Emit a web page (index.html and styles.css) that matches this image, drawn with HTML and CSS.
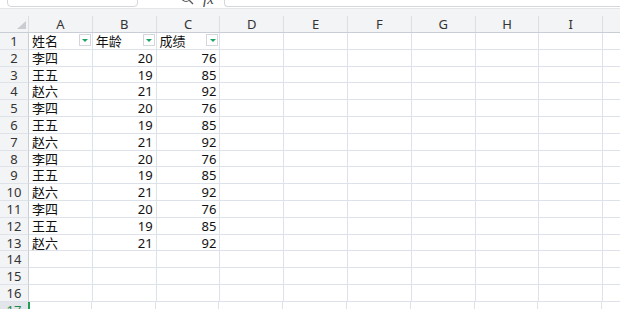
FILE: index.html
```html
<!DOCTYPE html>
<html lang="zh">
<head>
<meta charset="utf-8">
<link rel="stylesheet" href="styles.css">
</head>
<body>
<div class="app">
  <div class="topbar">
    <div class="namebox">K11</div>
    <div class="search">
      <svg width="14" height="14" viewBox="0 0 14 14"><circle cx="6" cy="6" r="4.5" fill="none" stroke="#555" stroke-width="1.2"/><line x1="9.3" y1="9.3" x2="13" y2="13" stroke="#555" stroke-width="1.3"/></svg>
    </div>
    <div class="fx">fx</div>
    <div class="formula"></div>
  </div>
  <div class="band"></div>
  <div class="sheet">
    <div class="row head">
      <div class="corner"><span class="tri"></span></div>
      <div class="ch">A</div><div class="ch">B</div><div class="ch">C</div><div class="ch">D</div><div class="ch">E</div><div class="ch">F</div><div class="ch">G</div><div class="ch">H</div><div class="ch">I</div><div class="ch"></div>
    </div>
    <div class="row">
      <div class="rh">1</div>
      <div class="c">姓名<span class="dd"></span></div><div class="c">年龄<span class="dd"></span></div><div class="c">成绩<span class="dd"></span></div>
      <div class="c"></div><div class="c"></div><div class="c"></div><div class="c"></div><div class="c"></div><div class="c"></div><div class="c"></div>
    </div>
    <div class="row"><div class="rh">2</div><div class="c">李四</div><div class="c n">20</div><div class="c n">76</div><div class="c"></div><div class="c"></div><div class="c"></div><div class="c"></div><div class="c"></div><div class="c"></div><div class="c"></div></div>
    <div class="row"><div class="rh">3</div><div class="c">王五</div><div class="c n">19</div><div class="c n">85</div><div class="c"></div><div class="c"></div><div class="c"></div><div class="c"></div><div class="c"></div><div class="c"></div><div class="c"></div></div>
    <div class="row"><div class="rh">4</div><div class="c">赵六</div><div class="c n">21</div><div class="c n">92</div><div class="c"></div><div class="c"></div><div class="c"></div><div class="c"></div><div class="c"></div><div class="c"></div><div class="c"></div></div>
    <div class="row"><div class="rh">5</div><div class="c">李四</div><div class="c n">20</div><div class="c n">76</div><div class="c"></div><div class="c"></div><div class="c"></div><div class="c"></div><div class="c"></div><div class="c"></div><div class="c"></div></div>
    <div class="row"><div class="rh">6</div><div class="c">王五</div><div class="c n">19</div><div class="c n">85</div><div class="c"></div><div class="c"></div><div class="c"></div><div class="c"></div><div class="c"></div><div class="c"></div><div class="c"></div></div>
    <div class="row"><div class="rh">7</div><div class="c">赵六</div><div class="c n">21</div><div class="c n">92</div><div class="c"></div><div class="c"></div><div class="c"></div><div class="c"></div><div class="c"></div><div class="c"></div><div class="c"></div></div>
    <div class="row"><div class="rh">8</div><div class="c">李四</div><div class="c n">20</div><div class="c n">76</div><div class="c"></div><div class="c"></div><div class="c"></div><div class="c"></div><div class="c"></div><div class="c"></div><div class="c"></div></div>
    <div class="row"><div class="rh">9</div><div class="c">王五</div><div class="c n">19</div><div class="c n">85</div><div class="c"></div><div class="c"></div><div class="c"></div><div class="c"></div><div class="c"></div><div class="c"></div><div class="c"></div></div>
    <div class="row"><div class="rh">10</div><div class="c">赵六</div><div class="c n">21</div><div class="c n">92</div><div class="c"></div><div class="c"></div><div class="c"></div><div class="c"></div><div class="c"></div><div class="c"></div><div class="c"></div></div>
    <div class="row"><div class="rh">11</div><div class="c">李四</div><div class="c n">20</div><div class="c n">76</div><div class="c"></div><div class="c"></div><div class="c"></div><div class="c"></div><div class="c"></div><div class="c"></div><div class="c"></div></div>
    <div class="row"><div class="rh">12</div><div class="c">王五</div><div class="c n">19</div><div class="c n">85</div><div class="c"></div><div class="c"></div><div class="c"></div><div class="c"></div><div class="c"></div><div class="c"></div><div class="c"></div></div>
    <div class="row"><div class="rh">13</div><div class="c">赵六</div><div class="c n">21</div><div class="c n">92</div><div class="c"></div><div class="c"></div><div class="c"></div><div class="c"></div><div class="c"></div><div class="c"></div><div class="c"></div></div>
    <div class="row"><div class="rh">14</div><div class="c"></div><div class="c"></div><div class="c"></div><div class="c"></div><div class="c"></div><div class="c"></div><div class="c"></div><div class="c"></div><div class="c"></div><div class="c"></div></div>
    <div class="row"><div class="rh">15</div><div class="c"></div><div class="c"></div><div class="c"></div><div class="c"></div><div class="c"></div><div class="c"></div><div class="c"></div><div class="c"></div><div class="c"></div><div class="c"></div></div>
    <div class="row"><div class="rh">16</div><div class="c"></div><div class="c"></div><div class="c"></div><div class="c"></div><div class="c"></div><div class="c"></div><div class="c"></div><div class="c"></div><div class="c"></div><div class="c"></div></div>
    <div class="row"><div class="rh sel">17</div><div class="c first"></div><div class="c"></div><div class="c"></div><div class="c"></div><div class="c"></div><div class="c"></div><div class="c"></div><div class="c"></div><div class="c"></div><div class="c"></div></div>
  </div>
</div>
</body>
</html>
```

FILE: styles.css
```css
* { box-sizing: border-box; }
html, body { margin: 0; padding: 0; }
body {
  width: 620px;
  height: 309px;
  overflow: hidden;
  background: #fff;
  font-family: "Noto Sans", "Noto Sans CJK SC", sans-serif;
  color: #1a1a1a;
}
.app { width: 620px; height: 309px; overflow: hidden; }

.topbar {
  height: 9px;
  background: #fff;
  border-bottom: 1px solid #e4e6ea;
  display: flex;
  align-items: flex-end;
  overflow: hidden;
}
.namebox {
  flex: none;
  margin-left: 7px;
  margin-bottom: 1px;
  width: 131px;
  height: 24px;
  border: 1px solid #d3d6dc;
  border-radius: 0 0 4px 4px;
  font-family: "Liberation Serif", serif;
  font-size: 13px;
  color: #333;
  text-align: center;
  line-height: 20px;
}
.search {
  flex: none;
  margin-left: 42px;
  margin-bottom: 3px;
  height: 14px;
}
.search svg { display: block; }
.fx {
  flex: none;
  margin-left: 9px;
  margin-bottom: 3px;
  font-family: "Liberation Serif", serif;
  font-style: italic;
  font-size: 15px;
  line-height: 12px;
  color: #444;
}
.formula {
  flex: 1;
  margin-left: 10px;
  margin-bottom: 1px;
  height: 24px;
  border: 1px solid #d3d6dc;
  border-right: none;
  border-radius: 0 0 0 4px;
  background: #fff;
}

.band { height: 7px; background: #f3f4f6; }

.sheet { display: flex; flex-direction: column; }
.row {
  display: flex;
  height: 16.8px;
  flex: none;
}
.row.head {
  height: 17px;
  background: #f3f4f6;
  border-bottom: 1px solid #c9cdd5;
}
.corner {
  flex: none;
  width: 29px;
  position: relative;
  border-right: 1px solid #dcdfe4;
}
.tri {
  position: absolute;
  right: 2px;
  bottom: 3px;
  width: 0; height: 0;
  border-left: 9px solid transparent;
  border-bottom: 8px solid #c9ccd1;
}
.ch {
  flex: none;
  width: 63.8px;
  border-right: 1px solid #dcdfe4;
  text-align: center;
  font-size: 13px;
  line-height: 16px;
  color: #333;
}
.rh {
  flex: none;
  width: 29px;
  background: #f3f4f6;
  border-right: 1px solid #c9cdd5;
  border-bottom: 1px solid #dfe2e8;
  text-align: center;
  font-size: 13px;
  line-height: 16px;
  color: #333;
}
.rh.sel { background: #e2e5e9; color: #1f8a4c; }
.c {
  flex: none;
  width: 63.8px;
  border-right: 1px solid #dde1ea;
  border-bottom: 1px solid #dde1ea;
  padding: 0 3px;
  font-size: 13px;
  line-height: 16px;
  white-space: nowrap;
  position: relative;
  color: #111;
}
.c.n { text-align: right; }
.c.first { border-left: 2px solid #1f9d55; margin-left: -1px; }
.dd {
  position: absolute;
  right: 1px;
  top: 1px;
  width: 12px;
  height: 12px;
  background: #fff;
  border: 1px solid #d4d7dc;
}
.dd::after {
  content: "";
  position: absolute;
  left: 2.5px;
  top: 4px;
  width: 0; height: 0;
  border-left: 3px solid transparent;
  border-right: 3px solid transparent;
  border-top: 3px solid #1fa363;
}
```
